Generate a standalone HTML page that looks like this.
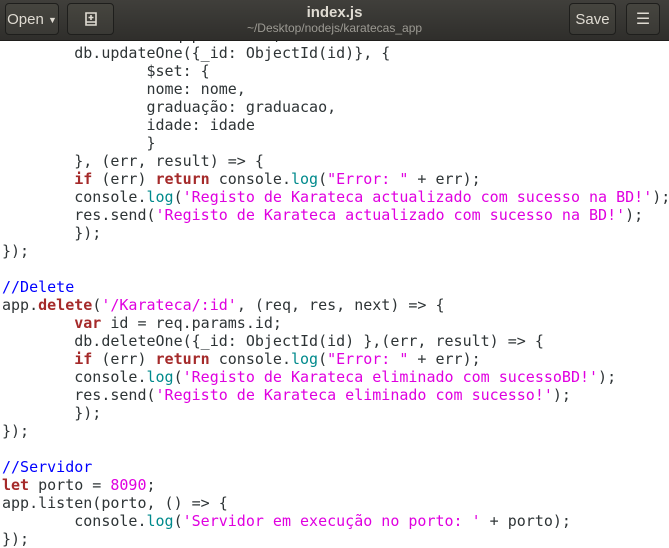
<!DOCTYPE html><html><head><style>
body{margin:0;width:669px;height:546px;overflow:hidden;background:#fff;position:relative;font-family:"Liberation Sans",sans-serif}
#code{position:absolute;left:2px;top:26px;margin:0;font:15px/18px "DejaVu Sans Mono",monospace;color:#2e3436;white-space:pre;tab-size:8}
.k{color:#a52a2a;font-weight:bold}.f{color:#008a8c}.s{color:#e000e0}.c{color:#0000ff}
#hdr{position:absolute;left:0;top:0;width:669px;height:40px;background:linear-gradient(#403f3b,#2f2e2b);border-bottom:1px solid #1f1e1c}
.b{position:absolute;top:3px;height:32px;border:1px solid #1e1e1c;border-radius:4px;background:linear-gradient(#46453f,#3a3935);color:#dfdbd2;font-size:15px;line-height:32px;text-align:center;box-sizing:border-box}
</style></head><body>
<pre id="code">        var id = req.params.id;
        db.updateOne({_id: ObjectId(id)}, {
                $set: {
                nome: nome,
                graduação: graduacao,
                idade: idade
                }
        }, (err, result) =&gt; {
        <span class="k">if</span> (err) <span class="k">return</span> console.<span class="f">log</span>(<span class="s">"Error: "</span> + err);
        console.<span class="f">log</span>(<span class="s">'Registo de Karateca actualizado com sucesso na BD!'</span>);
        res.send(<span class="s">'Registo de Karateca actualizado com sucesso na BD!'</span>);
        });
});

<span class="c">//Delete</span>
app.<span class="k">delete</span>(<span class="s">'/Karateca/:id'</span>, (req, res, next) =&gt; {
        <span class="k">var</span> id = req.params.id;
        db.deleteOne({_id: ObjectId(id) },(err, result) =&gt; {
        <span class="k">if</span> (err) <span class="k">return</span> console.<span class="f">log</span>(<span class="s">"Error: "</span> + err);
        console.<span class="f">log</span>(<span class="s">'Registo de Karateca eliminado com sucessoBD!'</span>);
        res.send(<span class="s">'Registo de Karateca eliminado com sucesso!'</span>);
        });
});

<span class="c">//Servidor</span>
<span class="k">let</span> porto = <span class="s">8090</span>;
app.listen(porto, () =&gt; {
        console.<span class="f">log</span>(<span class="s">'Servidor em execução no porto: '</span> + porto);
});</pre>
<div id="hdr">
<div class="b" style="left:5px;width:54px">Open <span style="font-size:9px;vertical-align:1px">▼</span></div>
<div class="b" style="left:67px;width:47px"><svg width="16" height="16" viewBox="0 0 16 16" style="vertical-align:-3px"><path d="M3 2h10v12H3zM3 11h10M8 4v5M5.5 6.5h5" fill="none" stroke="#dfdbd2" stroke-width="1.6"/></svg></div>
<div style="position:absolute;left:0;width:669px;top:4px;text-align:center;color:#dfdbd2;font-weight:bold;font-size:15px">index.js</div>
<div style="position:absolute;left:0;width:669px;top:21px;text-align:center;color:#9c9a93;font-size:12px">~/Desktop/nodejs/karatecas_app</div>
<div class="b" style="left:569px;width:47px">Save</div>
<div class="b" style="left:626px;width:34px;font-size:16px">☰</div>
</div>
</body></html>
